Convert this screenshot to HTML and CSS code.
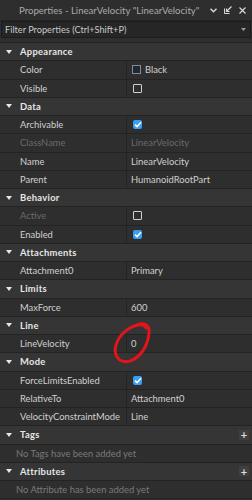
FILE: index.html
```html
<!DOCTYPE html>
<html>
<head>
<meta charset="utf-8">
<link rel="stylesheet" href="styles.css">
</head>
<body>
<div class="panel">
  <div class="titlebar">
    <span class="title">Properties - LinearVelocity "LinearVelocity"</span>
    <span class="tb-icons">
      <svg width="7" height="5" viewBox="0 0 7 5"><path d="M0.5 0.8 L3.5 3.8 L6.5 0.8" fill="none" stroke="#d8d8d8" stroke-width="1.4"/></svg>
      <svg width="8" height="8" viewBox="0 0 8 8"><path d="M0.5 2.5 V7.5 H5.5" fill="none" stroke="#d8d8d8" stroke-width="1"/><path d="M7.5 0.5 L3 5 M2.5 2.5 V5.5 H5.5" fill="none" stroke="#d8d8d8" stroke-width="1.2"/></svg>
      <svg width="7" height="7" viewBox="0 0 7 7"><path d="M0.5 0.5 L6.5 6.5 M6.5 0.5 L0.5 6.5" fill="none" stroke="#d8d8d8" stroke-width="1.2"/></svg>
    </span>
  </div>
  <div class="filter">
    <span>Filter Properties (Ctrl+Shift+P)</span>
    <svg width="5" height="3" viewBox="0 0 5 3"><path d="M0 0 H5 L2.5 3 Z" fill="#9a9a9a"/></svg>
  </div>
  <div class="list">
    <div class="hdr"><span class="arr"></span>Appearance</div>
    <div class="row"><div class="name">Color</div><div class="val"><span class="swatch"></span>Black</div></div>
    <div class="row"><div class="name">Visible</div><div class="val"><span class="cb"></span></div></div>
    <div class="hdr"><span class="arr"></span>Data</div>
    <div class="row"><div class="name">Archivable</div><div class="val"><span class="cb on"><svg width="8" height="7" viewBox="0 0 8 7"><path d="M1 3.6 L3.1 5.6 L7 1.2" fill="none" stroke="#fff" stroke-width="1.5"/></svg></span></div></div>
    <div class="row dis"><div class="name">ClassName</div><div class="val">LinearVelocity</div></div>
    <div class="row"><div class="name">Name</div><div class="val">LinearVelocity</div></div>
    <div class="row"><div class="name">Parent</div><div class="val">HumanoidRootPart</div></div>
    <div class="hdr"><span class="arr"></span>Behavior</div>
    <div class="row dis"><div class="name">Active</div><div class="val"><span class="cb"></span></div></div>
    <div class="row"><div class="name">Enabled</div><div class="val"><span class="cb on"><svg width="8" height="7" viewBox="0 0 8 7"><path d="M1 3.6 L3.1 5.6 L7 1.2" fill="none" stroke="#fff" stroke-width="1.5"/></svg></span></div></div>
    <div class="hdr"><span class="arr"></span>Attachments</div>
    <div class="row"><div class="name">Attachment0</div><div class="val">Primary</div></div>
    <div class="hdr"><span class="arr"></span>Limits</div>
    <div class="row"><div class="name">MaxForce</div><div class="val">600</div></div>
    <div class="hdr"><span class="arr"></span>Line</div>
    <div class="row"><div class="name">LineVelocity</div><div class="val">0</div></div>
    <div class="hdr"><span class="arr"></span>Mode</div>
    <div class="row"><div class="name">ForceLimitsEnabled</div><div class="val"><span class="cb on"><svg width="8" height="7" viewBox="0 0 8 7"><path d="M1 3.6 L3.1 5.6 L7 1.2" fill="none" stroke="#fff" stroke-width="1.5"/></svg></span></div></div>
    <div class="row"><div class="name">RelativeTo</div><div class="val">Attachment0</div></div>
    <div class="row"><div class="name">VelocityConstraintMode</div><div class="val">Line</div></div>
    <div class="hdr"><span class="arr"></span>Tags<span class="plus">+</span></div>
    <div class="empty">No Tags have been added yet</div>
    <div class="hdr"><span class="arr"></span>Attributes<span class="plus">+</span></div>
    <div class="empty">No Attribute has been added yet</div>
  </div>
  <svg class="scribble" width="44" height="48" viewBox="0 0 44 48"><path d="M26 6 C33 3 39 6 38 14 C37 25 31 38 19 42 C8 45 2 36 5 26 C8 16 17 8 27 6 C31 5.5 34 6.5 35 9" fill="none" stroke="#e3141b" stroke-width="3" stroke-linecap="round"/></svg>
</div>
</body>
</html>
```

FILE: styles.css
```css
html, body {
  margin: 0;
  padding: 0;
  background: #2e2e2e;
}
.panel {
  position: relative;
  width: 252px;
  height: 500px;
  overflow: hidden;
  font-family: "Lato", "Open Sans", sans-serif;
  font-size: 9.4px;
  color: #d0d0d0;
  background: #2e2e2e;
}
.titlebar {
  height: 21px;
  display: flex;
  align-items: center;
  padding-left: 19px;
  padding-right: 6px;
  background: #2e2e2e;
  border-bottom: 1px solid #232323;
  box-sizing: border-box;
}
.title {
  flex: 1;
  min-width: 0;
  overflow: hidden;
  color: #aaaaaa;
  font-size: 9.6px;
  white-space: nowrap;
}
.tb-icons {
  display: flex;
  align-items: center;
  gap: 7px;
}
.tb-icons svg { display: block; }
.filter {
  height: 17px;
  margin: 0 1px;
  display: flex;
  align-items: center;
  justify-content: space-between;
  padding: 0 4px 0 3px;
  background: #262626;
  border: 1px solid #1c1c1c;
  box-sizing: border-box;
  color: #c8c8c8;
  font-size: 9.2px;
}
.filter svg { display: block; }
.list {
  margin-top: 4px;
  border-top: 1px solid #232323;
}
.hdr {
  height: 18.25px;
  box-sizing: border-box;
  display: flex;
  align-items: center;
  padding-left: 6px;
  background: #353535;
  border-bottom: 1px solid #232323;
  color: #e6e6e6;
  font-weight: bold;
  letter-spacing: 0.3px;
}
.arr {
  width: 0;
  height: 0;
  border-left: 3px solid transparent;
  border-right: 3px solid transparent;
  border-top: 4px solid #e8e8e8;
  margin-right: 8px;
}
.plus {
  margin-left: auto;
  width: 10px;
  height: 10px;
  margin-right: 3px;
  background: #3f3f3f;
  display: flex;
  align-items: center;
  justify-content: center;
  font-weight: bold;
  font-size: 11px;
  color: #dddddd;
}
.row {
  height: 18.25px;
  box-sizing: border-box;
  display: grid;
  grid-template-columns: 127px 1fr;
  background: #2e2e2e;
  border-bottom: 1px solid #232323;
}
.name {
  padding-left: 20px;
  display: flex;
  align-items: center;
  border-right: 1px solid #232323;
  white-space: nowrap;
}
.val {
  padding-left: 4px;
  display: flex;
  align-items: center;
  white-space: nowrap;
}
.dis .name, .dis .val { color: #6a6a6a; }
.swatch {
  width: 7px;
  height: 7px;
  background: #1b2836;
  border: 1px solid #8a8a8a;
  margin: 0 4px 0 1px;
}
.cb {
  width: 7px;
  height: 7px;
  border: 1px solid #d0d0d0;
  border-radius: 1px;
  margin-left: 2px;
  display: flex;
  align-items: center;
  justify-content: center;
}
.cb.on {
  width: 9px;
  height: 9px;
  border: none;
  border-radius: 2px;
  background: #3a9ef0;
}
.cb svg { display: block; }
.empty {
  height: 18.25px;
  box-sizing: border-box;
  display: flex;
  align-items: center;
  padding-left: 16px;
  background: #2e2e2e;
  border-bottom: 1px solid #232323;
  color: #7a7a7a;
}
.scribble {
  position: absolute;
  left: 111px;
  top: 319px;
}
```
